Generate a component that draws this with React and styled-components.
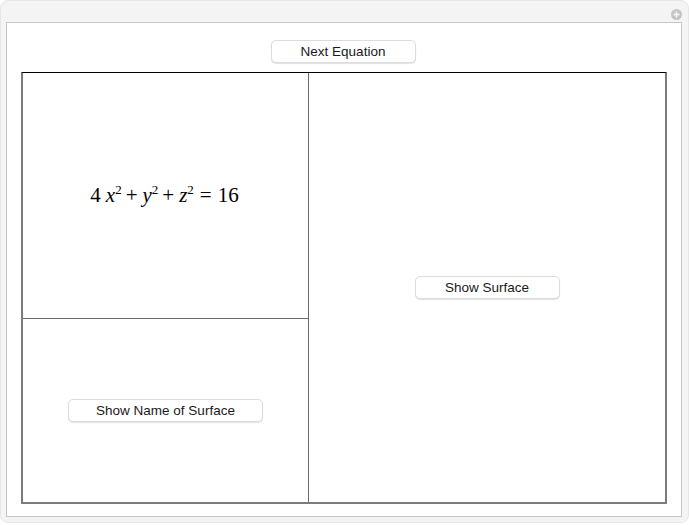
import React from "react";
import styled, { createGlobalStyle } from "styled-components";

const GlobalStyle = createGlobalStyle`
  html, body {
    margin: 0;
    padding: 0;
    background: #ffffff;
  }
  * {
    box-sizing: border-box;
  }
`;

const Frame = styled.div({
  position: "relative",
  width: "689px",
  height: "523px",
  background: "#f4f4f4",
  border: "1px solid #e6e6e6",
  borderRadius: "8px",
  padding: "21px 6px 6px 5px",
  fontFamily: "'Liberation Sans', Arial, sans-serif"
});

const CornerButton = styled.div({
  position: "absolute",
  top: "8px",
  right: "6px",
  width: "11px",
  height: "11px",
  borderRadius: "50%",
  background: "#c4c4c4",
  display: "flex",
  alignItems: "center",
  justifyContent: "center"
});

const Panel = styled.div({
  height: "495px",
  background: "#ffffff",
  border: "1px solid #c6c6c6",
  padding: "17px 14px 12px 14px",
  display: "flex",
  flexDirection: "column",
  alignItems: "center",
  gap: "9px"
});

const Button = styled.button`
  height: 23px;
  width: ${(p) => p.width}px;
  background: #ffffff;
  border: 1px solid #dcdcdc;
  border-radius: 5px;
  box-shadow: 0 1px 1px rgba(0, 0, 0, 0.12);
  font-family: "Liberation Sans", Arial, sans-serif;
  font-size: 13.5px;
  color: #1a1a1a;
  padding: 0;
  cursor: pointer;
  flex-shrink: 0;
`;

const TopButton = styled(Button)({
  marginLeft: "-2px"
});

const Grid = styled.div({
  alignSelf: "stretch",
  flex: 1,
  display: "grid",
  gridTemplateColumns: "286px 1fr",
  gridTemplateRows: "246px 1fr",
  borderTop: "1px solid #000",
  borderLeft: "2px solid #7c7c7c",
  borderRight: "2px solid #7c7c7c",
  borderBottom: "2px solid #7c7c7c"
});

const Cell = styled.div`
  display: flex;
  align-items: center;
  justify-content: center;
  border-right: ${(p) => (p.divRight ? "1px solid #6a6a6a" : "none")};
  border-bottom: ${(p) => (p.divBottom ? "1px solid #6a6a6a" : "none")};
  grid-row: ${(p) => p.rows || "auto"};
  grid-column: ${(p) => p.col || "auto"};
`;

const Equation = styled.div({
  fontFamily: "'Liberation Serif', 'Times New Roman', serif",
  fontSize: "21px",
  color: "#000",
  whiteSpace: "nowrap",
  marginRight: "2px"
});

const Var = styled.i({
  fontStyle: "italic",
  marginLeft: "1px"
});

const Sup = styled.sup({
  fontSize: "13px",
  verticalAlign: "8px",
  lineHeight: 0
});

const Op = styled.span`
  margin: 0 ${(p) => p.space || 4}px;
`;

function App() {
  return (
    <>
      <GlobalStyle />
      <Frame>
        <CornerButton>
          <svg width="7" height="7" viewBox="0 0 7 7">
            <path d="M3.5 0.5v6M0.5 3.5h6" stroke="#fff" strokeWidth="1.4" />
          </svg>
        </CornerButton>
        <Panel>
          <TopButton width={145}>Next Equation</TopButton>
          <Grid>
            <Cell divRight divBottom col="1" rows="1">
              <Equation>
                4<Var style={{ marginLeft: 5 }}>x</Var>
                <Sup>2</Sup>
                <Op>+</Op>
                <Var>y</Var>
                <Sup>2</Sup>
                <Op>+</Op>
                <Var>z</Var>
                <Sup>2</Sup>
                <Op space={6}>=</Op>16
              </Equation>
            </Cell>
            <Cell col="2" rows="1 / span 2">
              <Button width={145}>Show Surface</Button>
            </Cell>
            <Cell divRight col="1" rows="2">
              <Button width={195}>Show Name of Surface</Button>
            </Cell>
          </Grid>
        </Panel>
      </Frame>
    </>
  );
}

export default App;
